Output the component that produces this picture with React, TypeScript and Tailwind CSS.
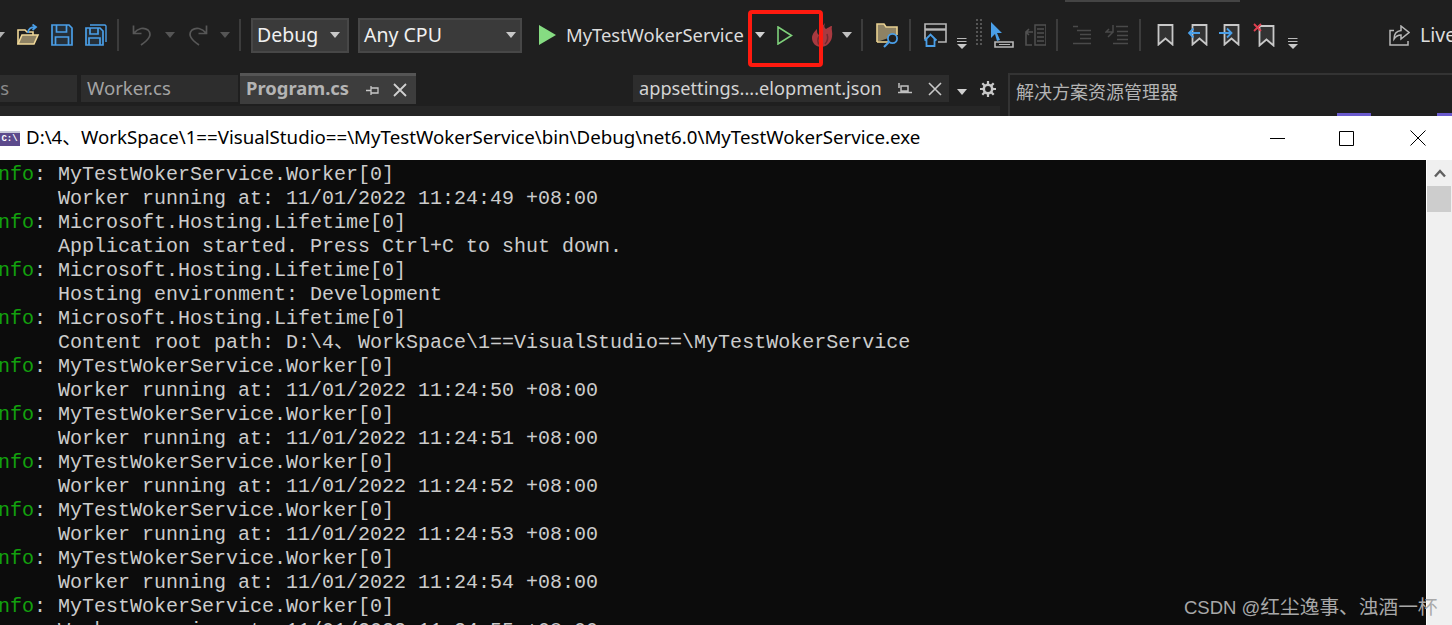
import { FC, ReactNode } from 'react'

const UI_FONT = "font-['Noto_Sans','Noto_Sans_CJK_SC',sans-serif]"

const Caret: FC<{ className?: string; fill?: string }> = ({ className = '', fill = '#a8a8a8' }) => (
  <svg width="10" height="6" viewBox="0 0 10 6" className={`shrink-0 ${className}`}>
    <path d="M0 0h10L5 6z" fill={fill} />
  </svg>
)

const Overflow: FC<{ className?: string }> = ({ className = '' }) => (
  <svg width="10" height="12" viewBox="0 0 10 12" className={`shrink-0 ${className}`}>
    <path d="M0 .5h9.5M0 3.5h9.5" stroke="#b8b8b8" />
    <path d="M0 6h10L5 11z" fill="#c8c8c8" />
  </svg>
)

const Sep: FC<{ className?: string }> = ({ className = '' }) => (
  <div className={`w-[2px] h-[32px] bg-[#3c3c3c] shrink-0 ${className}`} />
)

const Icon: FC<{ w: number; h: number; className?: string; children: ReactNode }> = ({ w, h, className = '', children }) => (
  <svg width={w} height={h} viewBox={`0 0 ${w} ${h}`} fill="none" className={`shrink-0 ${className}`}>
    {children}
  </svg>
)

const Bookmark = () => (
  <>
    <path d="M1.5 1h14v19.5l-7-6-7 6z" fill="#333" stroke="#c8c8c8" strokeWidth="1.8" />
  </>
)

const Toolbar = () => (
  <div className="flex items-center h-[70px]">
    <Caret className="-ml-[5px]" fill="#b0b0b0" />
    {/* open */}
    <Icon w={23} h={22} className="ml-[12px]">
      <path d="M1 20V6h7l2 2h6v3" stroke="#f0d898" strokeWidth="1.6" />
      <path d="M1 20l4-9h16l-4 9z" fill="#8e8264" stroke="#f0d898" strokeWidth="1.6" />
      <path d="M11 9c0-4 3-6 7-6M15.5 .5L19 3l-3.5 3" stroke="#4a9fe8" strokeWidth="1.8" />
    </Icon>
    {/* save */}
    <Icon w={22} h={22} className="ml-[11px]">
      <path d="M1 1h17l3 3v17H1z" fill="#252f38" stroke="#4a9fe8" strokeWidth="1.7" />
      <path d="M5.5 1v7h10V1M4.5 21v-8h13v8" stroke="#4a9fe8" strokeWidth="1.7" />
    </Icon>
    {/* save all */}
    <Icon w={22} h={22} className="ml-[12px]">
      <path d="M5 1h15l1 1v16" stroke="#4a9fe8" strokeWidth="1.4" />
      <path d="M1 4h14l3 3v14H1z" fill="#252f38" stroke="#4a9fe8" strokeWidth="1.7" />
      <path d="M5 4v6h8V4M4 21v-7h11v7" stroke="#4a9fe8" strokeWidth="1.7" />
    </Icon>
    <Sep className="ml-[10px]" />
    {/* undo */}
    <Icon w={20} h={22} className="ml-[13px]">
      <path d="M1.5 1.5v8h8M2 9c4-5 10-6 14-3 4 4 2 9-7 15" stroke="#575757" strokeWidth="1.7" />
    </Icon>
    <Caret className="ml-[13px]" fill="#555" />
    {/* redo */}
    <Icon w={20} h={22} className="ml-[13px]">
      <path d="M18.5 1.5v8h-8M18 9c-4-5-10-6-14-3-4 4-2 9 7 15" stroke="#575757" strokeWidth="1.7" />
    </Icon>
    <Caret className="ml-[12px]" fill="#555" />
    <Sep className="ml-[9px]" />

    <div className="ml-[10px] w-[98px] h-[35px] bg-[#3a3a3a] border-2 border-[#474747] flex items-center shrink-0">
      <span className={`ml-[4px] text-[19.5px] leading-none text-[#f0f0f0] ${UI_FONT}`}>Debug</span>
      <Caret className="ml-auto mr-[7px]" fill="#c8c8c8" />
    </div>
    <div className="ml-[9px] w-[164px] h-[35px] bg-[#3a3a3a] border-2 border-[#474747] flex items-center shrink-0">
      <span className={`ml-[4px] text-[19.5px] leading-none text-[#f0f0f0] ${UI_FONT}`}>Any CPU</span>
      <Caret className="ml-auto mr-[4px]" fill="#c8c8c8" />
    </div>

    <Icon w={17} h={20} className="ml-[17px]">
      <path d="M0 0l17 10L0 20z" fill="#86dc82" />
    </Icon>
    <span className={`ml-[10px] w-[179px] shrink-0 text-[18.4px] leading-none text-[#dcdcdc] whitespace-nowrap ${UI_FONT}`}>MyTestWokerService</span>
    <Caret className="ml-[10px]" fill="#d0d0d0" />
    <Icon w={16} h={19} className="ml-[12px]">
      <path d="M1 1l13.5 8.5L1 18z" stroke="#7ed07a" strokeWidth="1.6" />
    </Icon>
    {/* hot reload flame */}
    <Icon w={22} h={26} className="ml-[18px]">
      <path d="M14 1c-1 3-1 5 1 6 2-1 4-3 6-3-1 3 1 7 0 11-1 6-6 10-11 10C5 25 1 21 1 16c0-4 3-7 5-9 0 3 0 5 2 6 1-5 3-9 6-12z" fill="#a83a40" />
      <path d="M9 23c-3-2-3-6 0-10M14 22c3-3 3-7 2-10" stroke="#742a30" strokeWidth="1.5" />
    </Icon>
    <Caret className="ml-[9px]" fill="#c0c0c0" />
    <Sep className="ml-[9px]" />
    {/* open folder search */}
    <Icon w={24} h={25} className="ml-[13px]">
      <path d="M1 19V1h7l2 3h11v8" fill="#8e8264" stroke="#e8d090" strokeWidth="1.6" />
      <path d="M1 19h11" stroke="#e8d090" strokeWidth="1.6" />
      <circle cx="16.5" cy="15.5" r="4.6" fill="#1f1f1f" stroke="#4a9fe8" strokeWidth="1.8" />
      <path d="M13 19l-5 5" stroke="#4a9fe8" strokeWidth="2.2" />
    </Icon>
    <Sep className="ml-[9px]" />
    {/* home window */}
    <Icon w={23} h={24} className="ml-[13px]">
      <path d="M1 16V1h21v18h-8" stroke="#b8b8b8" strokeWidth="1.6" />
      <path d="M1 6.5h21" stroke="#b8b8b8" strokeWidth="2.4" />
      <path d="M.5 17.5l6-6 6 6M2.500 16v7h8v-7" fill="#1f1f1f" stroke="#4a9fe8" strokeWidth="1.8" />
    </Icon>
    <Overflow className="ml-[10px] mt-[17px]" />
    <div className="ml-[8px] w-[9px] h-[28px] shrink-0 mb-[7px] bg-[radial-gradient(#555_1px,transparent_1.3px)] bg-[length:4px_4px]" />
    {/* pointer */}
    <Icon w={24} h={27} className="ml-[6px]">
      <path d="M1 0l11 11H7l3 7-3 1-2-7-4 4z" fill="#4a9fe8" />
      <path d="M5 20h18v5H5z" stroke="#b8b8b8" strokeWidth="1.6" />
      <path d="M9 22.500h11" stroke="#b8b8b8" />
    </Icon>
    <Icon w={22} h={22} className="ml-[10px]">
      <path d="M9 8H2v13h6M2 8l3-3M2 8l3 3" stroke="#505050" strokeWidth="1.6" />
      <path d="M11 1h11v20H11zM13 5h7M13 9h7M13 13h7M13 17h7" stroke="#505050" strokeWidth="1.5" />
    </Icon>
    <Sep className="ml-[10px]" />
    <Icon w={20} h={20} className="ml-[14px]">
      <path d="M1 1.500h5M5 5.500h14M8 9.500h11M8 13.500h11M1 18.500h18" stroke="#4a4a4a" strokeWidth="1.5" />
    </Icon>
    <Icon w={24} h={22} className="ml-[13px]">
      <path d="M8 1v7H1l3-3M8 8L3 13M11 2.500h12M12 7.500h11M12 11.500h11M12 15.500h11M8 19.500h15" stroke="#4a4a4a" strokeWidth="1.5" />
    </Icon>
    <Sep className="ml-[10px]" />
    <Icon w={17} h={22} className="ml-[16px]"><Bookmark /></Icon>
    <Icon w={21} h={22} className="ml-[13px]">
      <g transform="translate(4 0)"><Bookmark /></g>
      <path d="M13 9H2M6.500 4.500L2 9l4.500 4.500" stroke="#4a9fe8" strokeWidth="1.8" />
    </Icon>
    <Icon w={22} h={22} className="ml-[10px]">
      <g transform="translate(5 0)"><Bookmark /></g>
      <path d="M1 9h12M9 4.500L13.500 9 9 13.500" stroke="#4a9fe8" strokeWidth="1.8" />
    </Icon>
    <Icon w={22} h={24} className="ml-[13px]">
      <g transform="translate(5 2)"><Bookmark /></g>
      <path d="M1 1l7 7M8 1L1 8" stroke="#e04050" strokeWidth="1.8" />
    </Icon>
    <Overflow className="ml-[13px] mt-[18px]" />
    {/* live share */}
    <Icon w={21} h={21} className="ml-[91px]">
      <path d="M5 5.500H1V20h18v-4" stroke="#b8b8b8" strokeWidth="1.5" />
      <path d="M12 1l8 6.500-8 6.500v-4c-3 0-5 1-7 4 0-5 3-8 7-8.500z" stroke="#b8b8b8" strokeWidth="1.5" />
    </Icon>
    <span className={`ml-[10px] text-[19.5px] leading-none text-[#dcdcdc] whitespace-nowrap ${UI_FONT}`}>Live Share</span>
  </div>
)

const Tabs = () => (
  <div className={`flex items-start h-[46px] pt-[3px] ${UI_FONT}`}>
    <div className="-ml-[40px] w-[117px] h-[27px] mt-[2px] bg-[#2d2d2d] shrink-0 flex items-center justify-end pr-[68px] text-[18.5px] text-[#8a8a8a] leading-none">cs</div>
    <div className="ml-[4px] w-[157px] h-[27px] mt-[2px] bg-[#2d2d2d] shrink-0 flex items-center pl-[6px] text-[18.6px] text-[#a4a4a4] leading-none">Worker.cs</div>
    <div className="ml-[2px] w-[176px] h-[31px] bg-[#3d3d3d] border-t-[3px] border-[#555] shrink-0 flex items-center pl-[6px] pb-[3px] text-[#b4b4b4] text-[18.4px] font-bold leading-none">
      <span>Program.cs</span>
      <Icon w={13} h={11} className="ml-[17px] mt-[3px]">
        <path d="M5 1v9M5 3h7v5H5M0 5.500h5" stroke="#c8c8c8" strokeWidth="1.300" />
      </Icon>
      <Icon w={14} h={14} className="ml-[14px] mt-[3px]">
        <path d="M1 1l12 12M13 1L1 13" stroke="#d0d0d0" strokeWidth="1.800" />
      </Icon>
    </div>
    <div className="ml-[217px] w-[316px] h-[27px] mt-[2px] bg-[#2d2d2d] shrink-0 flex items-center pl-[6px] text-[18.2px] text-[#d4d4d4] leading-none">
      <span className="whitespace-nowrap">appsettings....elopment.json</span>
      <Icon w={14} h={11} className="ml-[16px]">
        <path d="M1 0v5M3 3h7v5H3zM0 9.500h14" stroke="#c0c0c0" strokeWidth="1.500" />
      </Icon>
      <Icon w={14} h={14} className="ml-[16px]">
        <path d="M1 1l12 12M13 1L1 13" stroke="#c8c8c8" strokeWidth="1.600" />
      </Icon>
    </div>
    <Caret className="ml-[8px] mt-[16px]" fill="#d0d0d0" />
    <Icon w={16} h={16} className="ml-[13px] mt-[8px]">
      <circle cx="8" cy="8" r="4.200" stroke="#c8c8c8" strokeWidth="2.600" />
      <path d="M8 0v3M8 13v3M0 8h3M13 8h3M2.300 2.300l2.100 2.100M11.600 11.600l2.100 2.100M13.700 2.300l-2.100 2.100M4.400 11.600l-2.100 2.100" stroke="#c8c8c8" strokeWidth="2.200" />
    </Icon>
    <div className="ml-[12px] flex-1 h-[43px] border-t-2 border-l-2 border-[#333] relative">
      <div className="pl-[6px] pt-[3px] text-[18px] leading-[26px] text-[#b4b4b4] font-['Noto_Sans_CJK_SC',sans-serif] whitespace-nowrap">解决方案资源管理器</div>
      <div className="absolute left-[327px] bottom-0 w-[34px] h-[3px] bg-[#6a5acd]" />
      <div className="absolute left-[427px] bottom-0 w-[20px] h-[3px] bg-[#6a5acd]" />
    </div>
  </div>
)

const running = (s: number) => [
  ['MyTestWokerService.Worker[0]'],
  [`Worker running at: 11/01/2022 11:24:${s} +08:00`],
]

const lines: string[][] = [
  ...running(49),
  ['Microsoft.Hosting.Lifetime[0]'],
  ['Application started. Press Ctrl+C to shut down.'],
  ['Microsoft.Hosting.Lifetime[0]'],
  ['Hosting environment: Development'],
  ['Microsoft.Hosting.Lifetime[0]'],
  ['Content root path: D:\\4、WorkSpace\\1==VisualStudio==\\MyTestWokerService'],
  ...running(50),
  ...running(51),
  ...running(52),
  ...running(53),
  ...running(54),
  ...running(55),
]

// the console gives a CJK mark two full cells
const ConsoleText: FC<{ text: string }> = ({ text }) => {
  const parts = text.split('、')
  if (parts.length === 1) return <>{text}</>
  return (
    <>
      {parts[0]}
      <span className="inline-block w-[24px]">、</span>
      {parts[1]}
    </>
  )
}

const Console = () => (
  <div className="flex flex-1 min-h-0">
    <div className="w-[1426px] bg-[#0c0c0c] overflow-hidden pt-[3px] text-[20px] leading-[24px] text-[#cccccc] font-['Liberation_Mono','Noto_Sans_CJK_SC',monospace] whitespace-pre">
      {lines.map((l, i) => (
        <div key={i} className="h-[24px] -ml-[14px]">
          {i % 2 === 0 ? (
            <>
              <span className="text-[#13a10e]">info</span>
              {': '}
            </>
          ) : (
            '      '
          )}
          <ConsoleText text={l[0]} />
        </div>
      ))}
    </div>
    <div className="ml-[1px] flex-1 bg-[#f0f0f0] flex flex-col">
      <div className="h-[26px] flex items-center justify-center">
        <Icon w={12} h={9}>
          <path d="M1 7.500L6 2l5 5.500" stroke="#606060" strokeWidth="2.400" />
        </Icon>
      </div>
      <div className="h-[26px] w-[24px] bg-[#cdcdcd]" />
    </div>
  </div>
)

const App = () => (
  <div className="relative w-[1452px] h-[625px] overflow-hidden bg-[#1f1f1f] flex flex-col">
    <Toolbar />
    <Tabs />
    <div className="flex flex-col flex-1 min-h-0 bg-white">
      <div className="h-[44px] shrink-0 flex items-center bg-white">
        <div className="-ml-[1px] w-[21px] h-[15px] bg-[#5c4a8c] border-t-2 border-[#c8c8d8] flex items-center justify-center text-[9px] font-bold text-white leading-none font-['Liberation_Mono',monospace] shrink-0">C:\</div>
        <span className="ml-[6px] mb-[2px] text-[18.7px] leading-none text-black whitespace-nowrap font-['Noto_Sans','Noto_Sans_CJK_SC',sans-serif]">
          {'D:\\4、WorkSpace\\1==VisualStudio==\\MyTestWokerService\\bin\\Debug\\net6.0\\MyTestWokerService.exe'}
        </span>
        <Icon w={15} h={1} className="ml-auto">
          <path d="M0 .5h15" stroke="#000" />
        </Icon>
        <Icon w={15} h={15} className="ml-[54px]">
          <path d="M.5.500h14v14H.5z" stroke="#000" />
        </Icon>
        <Icon w={16} h={16} className="ml-[56px] mr-[26px]">
          <path d="M.5.500l15 15M15.500.500l-15 15" stroke="#000" />
        </Icon>
      </div>
      <Console />
    </div>
    {/* editor frame edge behind the console window */}
    <div className="absolute left-0 top-[106px] w-[1000px] h-[10px] bg-[#262626]" />
    {/* red annotation box over the toolbar */}
    <div className="absolute left-[748px] top-[10px] w-[75px] h-[57px] border-[4px] border-[#ff1a0f] rounded-[4px]" />
    <div className="absolute left-[1065px] top-0 w-[175px] h-[2px] bg-[#444]" />
    <div className="absolute left-[1184px] top-[595px] text-[18.5px] leading-[24px] text-[#a8a8a8] whitespace-nowrap font-['Liberation_Sans','Noto_Sans_CJK_SC',sans-serif]">
      CSDN @<span className="text-[19.7px]">红尘逸事、浊酒一杯</span>
    </div>
  </div>
)

export default App
